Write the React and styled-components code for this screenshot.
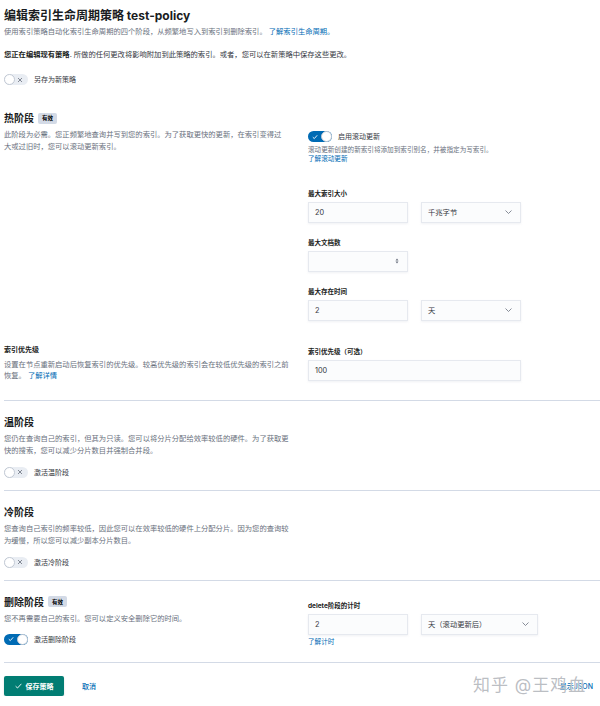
import React from "react";
import styled, { createGlobalStyle } from "styled-components";

const GlobalStyle = createGlobalStyle`
  body {
    margin: 0;
    background: #fff;
    font-family: "Inter", "Noto Sans CJK SC", sans-serif;
    color: #343741;
  }
`;

const Page = styled.div`
  position: relative;
  width: 596px;
  padding: 8px 0 0 4px;
`;

const Title = styled.h1`
  margin: 0;
  font-size: 12px;
  line-height: 16px;
  font-weight: 700;
  color: #1a1c21;
`;

const Text = styled.p`
  margin: ${(p) => p.$mt || 0}px 0 0;
  font-size: 7.3px;
  line-height: ${(p) => p.$lh || 11}px;
  color: ${(p) => (p.$dark ? "#343741" : "#69707d")};
  max-width: ${(p) => p.$max || 290}px;
  b {
    color: #1a1c21;
    font-weight: 700;
  }
`;

const NoWrapText = styled(Text)`
  max-width: none;
`;

const Link = styled.a`
  color: #006bb4;
  text-decoration: none;
  cursor: pointer;
`;

const SwitchRow = styled.label`
  display: flex;
  align-items: center;
  gap: 6px;
  margin-top: ${(p) => p.$mt || 0}px;
  font-size: 7px;
  line-height: 11px;
  color: #343741;
`;

const Track = styled.span`
  position: relative;
  width: 24px;
  height: 11px;
  border-radius: 6px;
  background: ${(p) => (p.$on ? "#006bb4" : "#e9edf3")};
  flex-shrink: 0;
  svg {
    position: absolute;
    top: 2.5px;
    left: ${(p) => (p.$on ? "4px" : "13px")};
  }
`;

const Thumb = styled.span`
  position: absolute;
  top: 0;
  left: ${(p) => (p.$on ? "13px" : "0")};
  width: 11px;
  height: 11px;
  box-sizing: border-box;
  border-radius: 50%;
  background: #fff;
  border: 1px solid #c2c9d4;
`;

const Switch = ({ on, label, mt }) => (
  <SwitchRow $mt={mt}>
    <Track $on={on}>
      {on ? (
        <svg width="6" height="6" viewBox="0 0 6 6">
          <polyline points="0.8,3.2 2.3,4.6 5.2,1.3" fill="none" stroke="#fff" strokeWidth="0.9" />
        </svg>
      ) : (
        <svg width="6" height="6" viewBox="0 0 6 6">
          <path d="M1 1 L5 5 M5 1 L1 5" stroke="#69707d" strokeWidth="0.8" />
        </svg>
      )}
      <Thumb $on={on} />
    </Track>
    {label}
  </SwitchRow>
);

const Section = styled.section`
  display: grid;
  grid-template-columns: 292px 1fr;
  column-gap: 12px;
  padding: ${(p) => p.$pad || "14px 0 12px"};
  border-bottom: ${(p) => (p.$line ? "1px solid #d3dae6" : "none")};
`;

const Left = styled.div`
  display: flex;
  flex-direction: column;
`;

const Right = styled.div`
  display: flex;
  flex-direction: column;
  padding-top: ${(p) => p.$pt || 0}px;
`;

const PhaseTitle = styled.h2`
  display: flex;
  align-items: center;
  gap: 4px;
  margin: 0;
  font-size: 10px;
  line-height: 14px;
  font-weight: 700;
  color: #1a1c21;
`;

const Badge = styled.span`
  display: inline-flex;
  align-items: center;
  height: 11px;
  padding: 0 4px;
  border-radius: 2px;
  background: #d3dae6;
  font-size: 5.5px;
  font-weight: 700;
  color: #000;
`;

const FieldLabel = styled.div`
  margin-top: ${(p) => p.$mt || 0}px;
  font-size: ${(p) => p.$size || 6.5}px;
  line-height: ${(p) => p.$lh || 9}px;
  font-weight: 700;
  color: #1a1c21;
`;

const Inputs = styled.div`
  display: flex;
  gap: 13px;
  margin-top: 3px;
`;

const Box = styled.div`
  display: flex;
  align-items: center;
  justify-content: space-between;
  box-sizing: border-box;
  width: ${(p) => p.$w || 100}px;
  height: 21px;
  padding: 0 8px 0 6px;
  background: #fbfcfd;
  border: 1px solid #e6e9ef;
  box-shadow: 0 1px 2px rgba(152, 162, 179, 0.15);
  font-size: 7.3px;
  color: #343741;
`;

const Chevron = () => (
  <svg width="7" height="4" viewBox="0 0 7 4">
    <polyline points="0.5,0.5 3.5,3.5 6.5,0.5" fill="none" stroke="#69707d" strokeWidth="0.8" />
  </svg>
);

const Spinner = () => (
  <svg width="4" height="6" viewBox="0 0 4 6">
    <path d="M0.5 2.4 L2 0.6 L3.5 2.4 Z M0.5 3.6 L2 5.4 L3.5 3.6 Z" fill="#69707d" />
  </svg>
);

const SmallText = styled.div`
  margin-top: ${(p) => p.$mt || 0}px;
  font-size: 6.6px;
  line-height: 9.5px;
  color: #69707d;
`;

const Footer = styled.div`
  display: flex;
  align-items: center;
  gap: 18px;
  padding: 13px 7px 0 0;
`;

const SaveButton = styled.button`
  display: flex;
  align-items: center;
  justify-content: center;
  gap: 4px;
  width: 60px;
  height: 20px;
  border: none;
  border-radius: 2px;
  background: #017d73;
  color: #fff;
  font-family: inherit;
  font-size: 7px;
  font-weight: 700;
  box-shadow: 0 1px 2px rgba(0, 0, 0, 0.15);
`;

const CancelLink = styled(Link)`
  font-size: 7px;
  font-weight: 500;
`;

const JsonLink = styled(Link)`
  margin-left: auto;
  font-size: 7px;
  font-weight: 500;
`;

const Watermark = styled.div`
  position: absolute;
  left: 473px;
  top: 671px;
  font-size: 17px;
  letter-spacing: 1px;
  color: rgba(175, 178, 184, 0.85);
  text-shadow: 0 0 1px #fff;
  pointer-events: none;
`;

export default function App() {
  return (
    <Page>
      <GlobalStyle />
      <Title>编辑索引生命周期策略 test-policy</Title>
      <NoWrapText $mt={2}>
        使用索引策略自动化索引生命周期的四个阶段，从频繁地写入到索引到删除索引。 <Link>了解索引生命周期。</Link>
      </NoWrapText>
      <NoWrapText $mt={12} $dark>
        <b>您正在编辑现有策略</b>. 所做的任何更改将影响附加到此策略的索引。或者，您可以在新策略中保存这些更改。
      </NoWrapText>
      <Switch on={false} label="另存为新策略" mt={14} />

      <Section $pad="26px 0 0">
        <Left>
          <PhaseTitle>
            热阶段 <Badge>有效</Badge>
          </PhaseTitle>
          <Text $mt={4} $lh={11.5} $max={284}>
            此阶段为必需。您正频繁地查询并写到您的索引。为了获取更快的更新，在索引变得过大或过旧时，您可以滚动更新索引。
          </Text>
        </Left>
        <Right $pt={20}>
          <Switch on label="启用滚动更新" />
          <SmallText $mt={3.5}>滚动更新创建的新索引将添加到索引别名，并被指定为写索引。</SmallText>
          <SmallText>
            <Link>了解滚动更新</Link>
          </SmallText>

          <FieldLabel $mt={25}>最大索引大小</FieldLabel>
          <Inputs>
            <Box>20</Box>
            <Box>
              千兆字节
              <Chevron />
            </Box>
          </Inputs>

          <FieldLabel $mt={16}>最大文档数</FieldLabel>
          <Inputs>
            <Box>
              <span />
              <Spinner />
            </Box>
          </Inputs>

          <FieldLabel $mt={16}>最大存在时间</FieldLabel>
          <Inputs>
            <Box>2</Box>
            <Box>
              天
              <Chevron />
            </Box>
          </Inputs>
        </Right>
      </Section>

      <Section $pad="24px 0 18px" $line>
        <Left>
          <FieldLabel $size={7} $lh={10}>索引优先级</FieldLabel>
          <Text $mt={4} $lh={11.7}>
            设置在节点重新启动后恢复索引的优先级。较高优先级的索引会在较低优先级的索引之前恢复。 <Link>了解详情</Link>
          </Text>
        </Left>
        <Right $pt={3.5}>
          <FieldLabel>索引优先级（可选）</FieldLabel>
          <Inputs>
            <Box $w={213}>100</Box>
          </Inputs>
        </Right>
      </Section>

      <Section $pad="14px 0 12px" $line>
        <Left>
          <PhaseTitle>温阶段</PhaseTitle>
          <Text $mt={4} $lh={12}>
            您仍在查询自己的索引，但其为只读。您可以将分片分配给效率较低的硬件。为了获取更快的搜索，您可以减少分片数目并强制合并段。
          </Text>
          <Switch on={false} label="激活温阶段" mt={10} />
        </Left>
      </Section>

      <Section $pad="14px 0 12px" $line>
        <Left>
          <PhaseTitle>冷阶段</PhaseTitle>
          <Text $mt={4} $lh={12}>
            您查询自己索引的频率较低，因此您可以在效率较低的硬件上分配分片。因为您的查询较为缓慢，所以您可以减少副本分片数目。
          </Text>
          <Switch on={false} label="激活冷阶段" mt={10} />
        </Left>
      </Section>

      <Section $pad="14px 0 15px" $line>
        <Left>
          <PhaseTitle>
            删除阶段 <Badge>有效</Badge>
          </PhaseTitle>
          <Text $mt={4} $lh={12}>
            您不再需要自己的索引。您可以定义安全删除它的时间。
          </Text>
          <Switch on label="激活删除阶段" mt={9} />
        </Left>
        <Right $pt={7}>
          <FieldLabel>delete阶段的计时</FieldLabel>
          <Inputs>
            <Box>2</Box>
            <Box $w={117}>
              天（滚动更新后）
              <Chevron />
            </Box>
          </Inputs>
          <SmallText $mt={3}>
            <Link>了解计时</Link>
          </SmallText>
        </Right>
      </Section>

      <Footer>
        <SaveButton>
          <svg width="7" height="6" viewBox="0 0 7 6">
            <polyline points="0.6,3.2 2.5,5 6.4,0.8" fill="none" stroke="#fff" strokeWidth="0.9" />
          </svg>
          保存策略
        </SaveButton>
        <CancelLink>取消</CancelLink>
        <JsonLink>显示JSON</JsonLink>
      </Footer>
      <Watermark>知乎 @王鸡血</Watermark>
    </Page>
  );
}
